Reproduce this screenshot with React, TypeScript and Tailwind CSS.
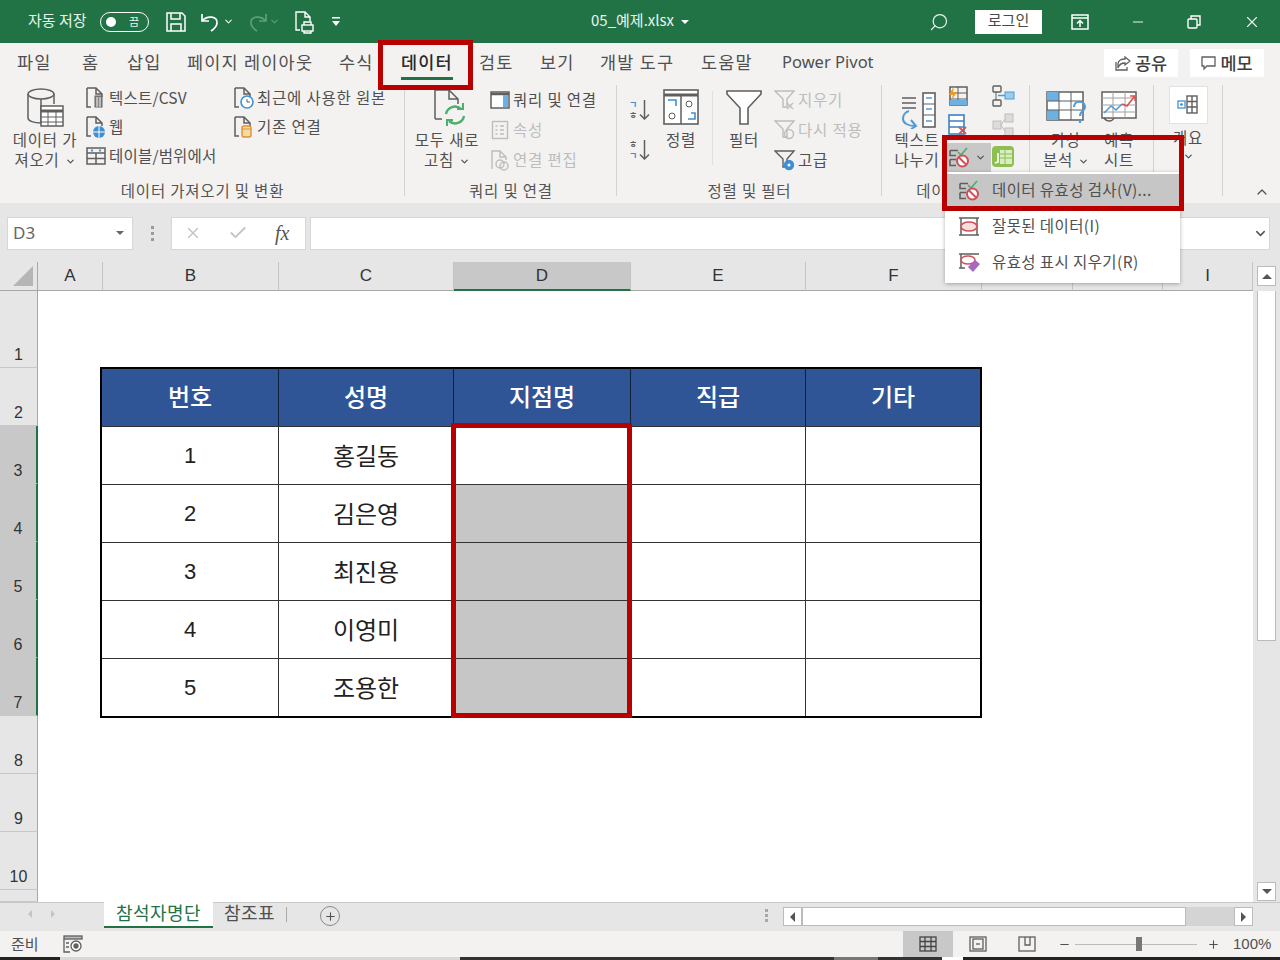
import type { ReactNode } from "react";
import { ChevronDown, ChevronUp, Minus, Plus, Search, X, Check } from "lucide-react";

const GRAY = "#5f5f5f";
const BLUE = "#4f9bd8";

const Doc = ({ children }: { children?: ReactNode }) => (
  <svg width="22" height="24" viewBox="0 0 22 24" fill="none">
    <path d="M2 2h9l6 6v3M11 2v6h6M2 2v19h4" stroke={GRAY} strokeWidth="1.5" />
    {children}
  </svg>
);

const DocCsv = () => (
  <Doc>
    <rect x="10" y="10" width="7" height="11" fill="#8a8a8a" stroke={GRAY} />
    <path d="M12 11v10M15 11v10" stroke="#eee" />
  </Doc>
);
const DocWeb = () => (
  <Doc>
    <circle cx="14" cy="17" r="6" fill="#3f8fd2" />
    <path d="M14 11v12M8 17h12" stroke="#fff" />
  </Doc>
);
const DocClock = () => (
  <Doc>
    <circle cx="14" cy="16" r="6" fill="#fff" stroke="#3f8fd2" strokeWidth="1.6" />
    <path d="M14 13v3h3" stroke={GRAY} />
  </Doc>
);
const DocDb = () => (
  <Doc>
    <rect x="9" y="11" width="9" height="11" rx="2" fill="#f6d9a8" stroke="#e0912f" strokeWidth="1.4" />
    <path d="M9 14h9" stroke="#e0912f" />
  </Doc>
);
const TableIcon = () => (
  <svg width="22" height="20" viewBox="0 0 22 20" fill="none" stroke={GRAY} strokeWidth="1.5">
    <rect x="2" y="2" width="18" height="16" />
    <path d="M2 7h18M2 12.5h18M11 7v11" />
    <path d="M6 4.5h2M14 4.5h2" stroke="#3f8fd2" strokeWidth="2" />
  </svg>
);
const Database = () => (
  <svg width="40" height="42" viewBox="0 0 40 42" fill="none">
    <path d="M3 7v24c0 3 6 5 13 5V7" stroke={GRAY} strokeWidth="1.5" fill="#f3f2f1" />
    <path d="M29 7v10" stroke={GRAY} strokeWidth="1.5" />
    <ellipse cx="16" cy="7" rx="13" ry="5" stroke={GRAY} strokeWidth="1.5" fill="#f3f2f1" />
    <rect x="16" y="19" width="22" height="20" fill="#fff" stroke={GRAY} strokeWidth="1.5" />
    <path d="M16 24h22" stroke={GRAY} strokeWidth="3" />
    <path d="M16 30h22M16 35h22M23 24v15M31 24v15" stroke={GRAY} />
  </svg>
);
const Refresh = () => (
  <svg width="36" height="38" viewBox="0 0 36 38" fill="none">
    <path d="M1 30V1h14l9 9v5M15 1v9h9M1 30h7" stroke={GRAY} strokeWidth="1.5" />
    <path d="M12 25a9 9 0 0 1 15-5M30 27a9 9 0 0 1-15 5" stroke="#4caf6b" strokeWidth="2.4" />
    <path d="M29 14v6h-6M13 37v-6h6" stroke="#4caf6b" strokeWidth="2" />
  </svg>
);
const QueryPane = () => (
  <svg width="20" height="18" viewBox="0 0 20 18" fill="none">
    <rect x="1" y="1" width="18" height="16" fill="#fff" stroke={GRAY} strokeWidth="1.5" />
    <path d="M1 3h18" stroke={GRAY} strokeWidth="2.5" />
    <rect x="13" y="4" width="5" height="12" fill="#6eb0e2" />
  </svg>
);
const Props = () => (
  <svg width="18" height="20" viewBox="0 0 18 20" fill="none" stroke="#bdbdbd" strokeWidth="1.4">
    <rect x="1.5" y="1.5" width="15" height="17" />
    <path d="M4.5 6h2M4.5 10h2M4.5 14h2M9 6h4M9 10h4M9 14h4" />
  </svg>
);
const LinkDoc = () => (
  <svg width="20" height="22" viewBox="0 0 20 22" fill="none" stroke="#bdbdbd" strokeWidth="1.4">
    <path d="M2 20V2h8l6 6v3M10 2v6h6" />
    <circle cx="10" cy="15" r="4" />
    <circle cx="14" cy="17" r="4" />
  </svg>
);
const SortAsc = ({ flip }: { flip?: boolean }) => (
  <div className="flex items-center gap-[2px]">
    <div className="flex flex-col text-[9px] leading-[11px] font-bold tracking-normal">
      <span className={flip ? "text-[#5f5f5f]" : "text-[#3f8fd2]"}>{flip ? "ㅎ" : "ㄱ"}</span>
      <span className={flip ? "text-[#3f8fd2]" : "text-[#5f5f5f]"}>{flip ? "ㄱ" : "ㅎ"}</span>
    </div>
    <svg width="11" height="20" viewBox="0 0 11 20" fill="none" stroke={GRAY} strokeWidth="1.5">
      <path d="M5.5 0v19M1 14.5l4.5 4.5 4.5-4.5" />
    </svg>
  </div>
);
const SortBox = () => (
  <svg width="36" height="36" viewBox="0 0 36 36" fill="none">
    <rect x="1" y="1" width="34" height="34" fill="#fff" stroke={GRAY} strokeWidth="1.6" />
    <path d="M1 6h34" stroke={GRAY} strokeWidth="3" />
    <path d="M18 6v29" stroke={GRAY} strokeWidth="1.5" />
    <path d="M5 11h8v6M28 24h4v6h-7" stroke="#3f8fd2" strokeWidth="1.6" />
    <circle cx="9" cy="27" r="3" stroke={GRAY} />
    <circle cx="26" cy="15" r="3" stroke={GRAY} />
  </svg>
);
const Funnel = () => (
  <svg width="36" height="36" viewBox="0 0 36 36" fill="none" stroke={GRAY} strokeWidth="1.6">
    <path d="M1 2h34v3L22 19v16h-8V19L1 5z" fill="#fff" />
  </svg>
);
const SmallFunnel = ({ tone, mark }: { tone: string; mark: "x" | "r" | "g" }) => (
  <svg width="22" height="22" viewBox="0 0 22 22" fill="none" stroke={tone} strokeWidth="1.4">
    <path d="M1 2h19L13 10v8h-4v-8z" fill="#f3f2f1" />
    {mark === "x" && <path d="M13 14l6 6M19 14l-6 6" />}
    {mark === "r" && <circle cx="15" cy="15" r="4.5" />}
    {mark === "g" && <circle cx="15" cy="16" r="4.5" fill="#3f8fd2" stroke="#3f8fd2" />}
    {mark === "g" && <circle cx="15" cy="16" r="1.5" fill="#fff" stroke="none" />}
  </svg>
);
const SplitText = () => (
  <svg width="40" height="38" viewBox="0 0 40 38" fill="none">
    <path d="M5 7h14M5 12h14M5 17h14" stroke={GRAY} strokeWidth="1.6" />
    <rect x="26" y="2" width="12" height="34" fill="#fff" stroke={GRAY} strokeWidth="1.6" />
    <path d="M26 13h12M26 24h12" stroke={GRAY} />
    <path d="M29 7h6M29 18h6M29 30h6" stroke={BLUE} strokeWidth="1.6" />
    <path d="M12 20a8 8 0 0 0-6 8c0 4 5 7 12 7" stroke={BLUE} strokeWidth="2" />
    <path d="M14 29l5 6-5 3" stroke={BLUE} strokeWidth="2" />
  </svg>
);
const Flash = () => (
  <svg width="22" height="22" viewBox="0 0 22 22" fill="none">
    <rect x="4" y="2" width="17" height="18" stroke={GRAY} strokeWidth="1.5" />
    <path d="M4 8h17M4 14h17M12 2v18" stroke={GRAY} />
    <path d="M4 15h17v5H4z" fill="#6eb0e2" />
    <path d="M8 1L3 10h4l-2 6 6-9H7z" fill="#ef9b20" />
  </svg>
);
const Dedup = () => (
  <svg width="22" height="24" viewBox="0 0 22 24" fill="none">
    <rect x="3" y="2" width="15" height="19" fill="#fff" stroke="#3f7fc2" strokeWidth="1.6" />
    <path d="M3 8h15M3 14h15" stroke="#3f7fc2" strokeWidth="1.6" />
    <path d="M13 14l7 7M20 14l-7 7" stroke="#d9534f" strokeWidth="1.8" />
  </svg>
);
const Validation = () => (
  <svg width="22" height="21" viewBox="0 0 22 21" fill="none">
    <path d="M2 3.5h8M2 3.5v5h6M2 12.5v6h6M2 12.5h6" stroke={GRAY} strokeWidth="1.6" />
    <path d="M10 5l3 3 6-7" stroke="#4caf6b" strokeWidth="1.6" />
    <circle cx="14.5" cy="14" r="5.5" fill="#fff" stroke="#d2505a" strokeWidth="2" />
    <path d="M10.5 10l8 8" stroke="#d2505a" strokeWidth="2" />
  </svg>
);
const Circled = () => (
  <svg width="22" height="21" viewBox="0 0 22 21" fill="none">
    <path d="M1 2h20M1 19h20M3 2v17M19 2v17" stroke={GRAY} strokeWidth="1.5" />
    <ellipse cx="11" cy="10.5" rx="8" ry="4.5" fill="#f7dfe0" stroke="#d2505a" strokeWidth="1.6" />
  </svg>
);
const ClearCircle = () => (
  <svg width="22" height="21" viewBox="0 0 22 21" fill="none">
    <path d="M1 2h20M3 2v14M1 16h6" stroke={GRAY} strokeWidth="1.5" />
    <ellipse cx="10" cy="8" rx="7" ry="4" stroke="#d2505a" strokeWidth="1.5" />
    <path d="M10 15l7-7 5 4-7 8z" fill="#a767c5" />
  </svg>
);
const Consolidate = () => (
  <svg width="24" height="22" viewBox="0 0 24 22" fill="none">
    <rect x="2" y="1" width="8" height="6" rx="1" stroke={GRAY} strokeWidth="1.4" />
    <rect x="2" y="15" width="8" height="6" rx="1" stroke={GRAY} strokeWidth="1.4" />
    <path d="M5 7v8" stroke={GRAY} />
    <rect x="14" y="7" width="9" height="7" fill="#9ccbee" stroke={BLUE} />
    <path d="M7 10.5h7" stroke={BLUE} strokeWidth="1.5" />
  </svg>
);
const Relations = () => (
  <svg width="24" height="24" viewBox="0 0 24 24" fill="#dcdcdc" stroke="#bdbdbd">
    <rect x="14" y="1" width="8" height="8" />
    <rect x="2" y="8" width="8" height="8" />
    <rect x="14" y="15" width="8" height="8" />
    <path d="M10 12l4-6M10 12l4 6" />
  </svg>
);
const DataModel = () => (
  <svg width="24" height="26" viewBox="0 0 24 26" fill="none">
    <rect x="1" y="3" width="22" height="21" rx="4" fill="#8cc152" />
    <rect x="9" y="7" width="12" height="14" fill="#d9ecc2" />
    <path d="M9 11h12M9 15h12M14 7v14" stroke="#8cc152" />
    <path d="M7 10v9l-3 1" stroke="#fff" strokeWidth="1.6" />
  </svg>
);
const WhatIf = () => (
  <svg width="42" height="34" viewBox="0 0 42 34" fill="none">
    <rect x="1" y="1" width="36" height="28" fill="#fff" stroke={GRAY} strokeWidth="1.5" />
    <rect x="1" y="1" width="12" height="9" fill="#6eb0e2" />
    <rect x="1" y="19" width="12" height="10" fill="#6eb0e2" />
    <path d="M1 10h36M1 19h36M13 1v28M25 1v28" stroke={GRAY} />
    <path d="M28 16c0-7 11-7 11 0 0 4-5 4-5 9M34 29v3" stroke={BLUE} strokeWidth="2.2" />
  </svg>
);
const Forecast = () => (
  <svg width="36" height="32" viewBox="0 0 36 32" fill="none">
    <rect x="1" y="1" width="34" height="26" fill="#fff" stroke={GRAY} strokeWidth="1.5" />
    <path d="M1 7h34M1 14h34M1 21h34M12 1v26M24 1v26" stroke="#a0a0a0" />
    <path d="M3 22l7-7 5 4 6-6" stroke={BLUE} strokeWidth="1.6" />
    <path d="M21 13l5 2 7-9M29 5h5v5" stroke="#d9534f" strokeWidth="1.6" />
    <path d="M3 27c3 4 8 4 10 0" stroke={GRAY} strokeWidth="1.4" />
  </svg>
);
const Outline = () => (
  <svg width="22" height="20" viewBox="0 0 22 20" fill="none" stroke={GRAY} strokeWidth="1.4">
    <rect x="1" y="6" width="7" height="7" stroke={BLUE} />
    <path d="M3 9.5h3M4.5 8v3" stroke={BLUE} />
    <rect x="10" y="1" width="10" height="17" />
    <path d="M10 6.5h10M10 12h10M15 1v17" />
  </svg>
);

const Tab = ({ children, width, active }: { children: ReactNode; width: string; active?: boolean }) => (
  <div className={`shrink-0 ${width}`}>
    <div className={`relative inline-block pb-[5px] ${active ? "font-medium text-[#2a2a2a]" : ""}`}>
      {children}
      {active && <div className="absolute left-0 right-0 bottom-0 h-[3px] bg-[#217346]" />}
    </div>
  </div>
);

const Row = ({ icon, label, faded, tall, tight }: { icon: ReactNode; label: string; faded?: boolean; tall?: boolean; tight?: boolean }) => (
  <div className={`flex items-center gap-[2px] whitespace-nowrap ${tall ? "h-[30px]" : "h-[29px]"} ${faded ? "text-[#bdbdbd]" : ""}`}>
    <div className="flex w-[22px] justify-center">{icon}</div>
    <span className={tight ? "tracking-[0.2px]" : ""}>{label}</span>
  </div>
);

const Chev = () => <ChevronDown className="ml-[5px] inline h-[11px] w-[11px]" strokeWidth={2.6} />;

const Big = ({ icon, top, bottom, width, arrow }: { icon: ReactNode; top: string; bottom?: string; width: string; arrow?: boolean }) => (
  <div className={`flex shrink-0 flex-col items-center ${width}`}>
    <div className="flex h-[46px] items-end">{icon}</div>
    <div className="whitespace-nowrap leading-[20px]">{top}</div>
    {bottom && (
      <div className="whitespace-nowrap leading-[20px]">
        {bottom}
        {arrow && <Chev />}
      </div>
    )}
  </div>
);

const Group = ({ width, label, children }: { width: string; label: string; children: ReactNode }) => (
  <div className={`relative flex shrink-0 flex-col ${width}`}>
    <div className="flex flex-1 items-start pt-[3px]">{children}</div>
    <div className="h-[25px] whitespace-nowrap text-center leading-[24px] text-[#555]">{label}</div>
    <div className="absolute right-0 top-[5px] bottom-[7px] w-px bg-[#d2d2d2]" />
  </div>
);

const colHeads = [
  ["A", "w-[65px]"],
  ["B", "w-[176px]"],
  ["C", "w-[175px]"],
  ["D", "w-[177px]"],
  ["E", "w-[175px]"],
  ["F", "w-[176px]"],
  ["", "w-[91px]"],
  ["", "w-[90px]"],
  ["I", "w-[90px]"],
];

const rowHeads = [
  ["1", "h-[77px]"],
  ["2", "h-[58px]"],
  ["3", "h-[58px]"],
  ["4", "h-[58px]"],
  ["5", "h-[58px]"],
  ["6", "h-[58px]"],
  ["7", "h-[58px]"],
  ["8", "h-[58px]"],
  ["9", "h-[58px]"],
  ["10", "h-[58px]"],
  ["", "h-[12px]"],
];

const people = [
  ["1", "홍길동"],
  ["2", "김은영"],
  ["3", "최진용"],
  ["4", "이영미"],
  ["5", "조용한"],
];

export default function App() {
  return (
    <div
      className="relative flex h-[960px] w-[1280px] flex-col overflow-hidden bg-[#f3f2f1] text-[16px] text-[#505050]"
      style={{ fontFamily: "'Noto Sans CJK KR', 'Noto Sans', sans-serif" }}
    >
      {/* Title bar */}
      <div className="flex h-[43px] shrink-0 items-center bg-[#217346] text-[#e9f3ed]">
        <span className="ml-[28px] w-[72px] whitespace-nowrap pb-[2px] text-[15px]">자동 저장</span>
        <div className="flex h-[20px] w-[49px] items-center justify-between rounded-full border border-white pl-[5px] pr-[9px]">
          <div className="h-[10px] w-[10px] rounded-full bg-white" />
          <span className="text-[11px] leading-none">끔</span>
        </div>
        <svg className="ml-[16px]" width="22" height="22" viewBox="0 0 22 22" fill="none" stroke="#fff" strokeWidth="1.5">
          <path d="M2 2h15l3 3v15H2zM6 2v6h9V2M6 20v-7h10v7" />
        </svg>
        <svg className="ml-[13px]" width="22" height="22" viewBox="0 0 22 22" fill="none" stroke="#fff" strokeWidth="1.7">
          <path d="M2 3v7h7M2 10c5-6 16-5 15 2 0 3-3 6-6 8" />
        </svg>
        <ChevronDown className="ml-[1px] h-[11px] w-[11px]" strokeWidth={2.5} />
        <svg className="ml-[12px]" width="22" height="22" viewBox="0 0 22 22" fill="none" stroke="#5d9f7d" strokeWidth="1.7">
          <path d="M20 3v7h-7M20 10C15 4 4 5 5 12c0 3 3 6 6 8" />
        </svg>
        <ChevronDown className="ml-[1px] h-[11px] w-[11px] text-[#5d9f7d]" strokeWidth={2.5} />
        <svg className="ml-[13px]" width="22" height="24" viewBox="0 0 22 24" fill="none" stroke="#fff" strokeWidth="1.4">
          <path d="M7 20H3V2h9l5 5v4M12 2v5h5" />
          <rect x="9" y="15" width="11" height="6" />
          <path d="M11 15v-3h7v3M11 21v2h7v-2" />
        </svg>
        <svg className="ml-[16px]" width="10" height="12" viewBox="0 0 10 12" fill="#fff">
          <path d="M1 1h8v1.5H1zM1 5h8L5 10z" />
        </svg>
        <div className="ml-[250px] w-[70px] whitespace-nowrap pb-[3px] text-[15px]">05_예제.xlsx</div>
        <div className="ml-[20px] h-0 w-0 border-x-[4px] border-t-[4px] border-x-transparent border-t-white" />
        <Search className="ml-[240px] h-[20px] w-[20px] -scale-x-100" strokeWidth={1.5} />
        <div className="ml-[26px] flex h-[24px] w-[67px] items-center justify-center bg-white pb-[2px] text-[15px] text-[#4a4a4a]">로그인</div>
        <svg className="ml-[29px]" width="18" height="16" viewBox="0 0 18 16" fill="none" stroke="#fff" strokeWidth="1.5">
          <rect x="1" y="1" width="16" height="14" />
          <path d="M1 4h16M9 13V7M6 9.5L9 6.5l3 3" />
        </svg>
        <Minus className="ml-[41px] h-[16px] w-[16px]" strokeWidth={1.5} />
        <svg className="ml-[41px]" width="14" height="14" viewBox="0 0 14 14" fill="none" stroke="#fff" strokeWidth="1.4">
          <rect x="1" y="4" width="9" height="9" rx="1" />
          <path d="M4 4V1h9v9h-3" />
        </svg>
        <X className="ml-[42px] h-[18px] w-[18px]" strokeWidth={1.5} />
      </div>

      {/* Ribbon tabs */}
      <div className="flex h-[37px] shrink-0 items-start justify-between pl-[17px] pt-[6px] text-[17.5px] leading-[26px]">
        <div className="flex whitespace-nowrap tracking-[1.2px]">
          <Tab width="w-[65px]">파일</Tab>
          <Tab width="w-[45px]">홈</Tab>
          <Tab width="w-[60px]">삽입</Tab>
          <Tab width="w-[152px]">페이지 레이아웃</Tab>
          <Tab width="w-[62px]">수식</Tab>
          <Tab width="w-[78px]" active>데이터</Tab>
          <Tab width="w-[61px]">검토</Tab>
          <Tab width="w-[60px]">보기</Tab>
          <Tab width="w-[101px]">개발 도구</Tab>
          <Tab width="w-[81px]">도움말</Tab>
          <span className="text-[16.5px] tracking-normal" style={{ fontFamily: "'Noto Sans', sans-serif" }}>Power Pivot</span>
        </div>
        <div className="mr-[16px] flex gap-[12px] text-[#3f3f3f]">
          <div className="flex h-[28px] w-[74px] items-center justify-center gap-[4px] bg-white font-medium">
            <svg width="16" height="15" viewBox="0 0 16 15" fill="none" stroke={GRAY} strokeWidth="1.3">
              <path d="M10 1l5 4-5 4V7C6 7 4 9 3 12V8c0-3 3-5 7-5zM1 6v8h11v-3" />
            </svg>
            공유
          </div>
          <div className="flex h-[28px] w-[74px] items-center justify-center gap-[4px] bg-white font-medium">
            <svg width="15" height="15" viewBox="0 0 15 15" fill="none" stroke={GRAY} strokeWidth="1.3">
              <path d="M1 1h13v9H6l-3 3v-3H1z" />
            </svg>
            메모
          </div>
        </div>
      </div>

      {/* Ribbon */}
      <div className="flex h-[123px] shrink-0 text-[15.5px] tracking-[0.8px] shadow-[0_2px_3px_rgba(0,0,0,0.18)]">
        <Group width="w-[405px]" label="데이터 가져오기 및 변환">
          <div className="ml-[5px]">
            <Big icon={<Database />} top="데이터 가" bottom="져오기" width="w-[80px]" arrow />
          </div>
          <div className="flex w-[148px] flex-col">
            <Row icon={<DocCsv />} label="텍스트/CSV" tight />
            <Row icon={<DocWeb />} label="웹" />
            <Row icon={<TableIcon />} label="테이블/범위에서" tight />
          </div>
          <div className="flex flex-col">
            <Row icon={<DocClock />} label="최근에 사용한 원본" />
            <Row icon={<DocDb />} label="기존 연결" />
          </div>
        </Group>
        <Group width="w-[212px]" label="쿼리 및 연결">
          <Big icon={<div className="ml-[10px] pb-[2px]"><Refresh /></div>} top="모두 새로" bottom="고침" width="w-[84px]" arrow />
          <div className="flex flex-col pt-[2px]">
            <Row icon={<QueryPane />} label="쿼리 및 연결" tall />
            <Row icon={<Props />} label="속성" faded tall />
            <Row icon={<LinkDoc />} label="연결 편집" faded tall />
          </div>
        </Group>
        <Group width="w-[265px]" label="정렬 및 필터">
          <div className="ml-[12px] flex h-[78px] w-[34px] flex-col justify-between pt-[16px]">
            <SortAsc />
            <SortAsc flip />
          </div>
          <Big icon={<div className="pb-[4px]"><SortBox /></div>} top="정렬" width="w-[36px]" />
          <div className="mx-[13px] mt-[8px] h-[74px] w-px bg-[#e0e0e0]" />
          <Big icon={<div className="pb-[4px]"><Funnel /></div>} top="필터" width="w-[36px]" />
          <div className="ml-[12px] flex flex-col pt-[2px]">
            <Row icon={<SmallFunnel tone="#bdbdbd" mark="x" />} label="지우기" faded tall />
            <Row icon={<SmallFunnel tone="#bdbdbd" mark="r" />} label="다시 적용" faded tall />
            <Row icon={<SmallFunnel tone={GRAY} mark="g" />} label="고급" tall />
          </div>
        </Group>
        <Group width="w-[148px]" label="데이터 도구">
          <div className="ml-[10px]">
            <Big icon={<SplitText />} top="텍스트" bottom="나누기" width="w-[50px]" />
          </div>
          <div className="ml-[4px] flex flex-col gap-[6px] pt-[2px]">
            <Flash />
            <Dedup />
            <Validation />
          </div>
          <div className="ml-[23px] flex flex-col gap-[6px] pt-[2px]">
            <Consolidate />
            <Relations />
            <DataModel />
          </div>
        </Group>
        <Group width="w-[124px]" label="">
          <div className="ml-[10px]">
            <Big icon={<div className="pb-[4px] pl-[2px]"><WhatIf /></div>} top="가상" bottom="분석" width="w-[52px]" arrow />
          </div>
          <div className="ml-[5px]">
            <Big icon={<div className="pb-[6px]"><Forecast /></div>} top="예측" bottom="시트" width="w-[44px]" />
          </div>
        </Group>
        <Group width="w-[69px]" label="">
          <div className="ml-[14px] flex w-[40px] flex-col items-center pt-[3px]">
            <div className="flex h-[38px] w-[39px] items-center justify-center border border-[#e2e2e2] bg-white">
              <Outline />
            </div>
            <div className="mt-[3px] leading-[20px]">개요</div>
            <ChevronDown className="mt-[4px] h-[11px] w-[11px]" strokeWidth={2.6} />
          </div>
        </Group>
        <div className="flex flex-1 items-end justify-end pb-[3px] pr-[10px]">
          <ChevronUp className="h-[16px] w-[16px]" strokeWidth={1.8} />
        </div>
      </div>

      {/* Formula bar */}
      <div className="flex h-[59px] shrink-0 items-center bg-[#e6e6e6] pl-[7px] pr-[10px] pt-[1px]">
        <div className="flex h-[33px] w-[126px] items-center justify-between border border-[#d6d6d6] bg-white pl-[5px] pr-[8px] text-[17px] text-[#666]" style={{ fontFamily: "'Noto Sans', sans-serif" }}>
          D3
          <div className="h-0 w-0 border-x-[4px] border-t-[4px] border-x-transparent border-t-[#666]" />
        </div>
        <div className="flex w-[38px] flex-col items-center gap-[3px]">
          <div className="h-[3px] w-[3px] bg-[#9a9a9a]" />
          <div className="h-[3px] w-[3px] bg-[#9a9a9a]" />
          <div className="h-[3px] w-[3px] bg-[#9a9a9a]" />
        </div>
        <div className="flex h-[33px] w-[135px] items-center border border-[#d6d6d6] bg-white pl-[12px] text-[#c4c4c4]">
          <X className="h-[18px] w-[18px]" strokeWidth={2} />
          <Check className="ml-[26px] h-[20px] w-[20px]" strokeWidth={2.2} />
          <span className="ml-[27px] text-[20px] italic text-[#555]" style={{ fontFamily: "'Liberation Serif', serif" }}>fx</span>
        </div>
        <div className="ml-[4px] flex h-[33px] flex-1 items-center justify-end border border-[#d6d6d6] bg-white pr-[1px]">
          <ChevronDown className="h-[15px] w-[15px] text-[#555]" strokeWidth={2.4} />
        </div>
      </div>

      {/* Column headers */}
      <div className="flex h-[29px] shrink-0 bg-[#e6e6e6] text-[17px] text-[#333]" style={{ fontFamily: "'Liberation Sans', sans-serif" }}>
        <div className="flex w-[38px] shrink-0 items-end justify-end border-b border-r border-[#a8a8a8] pb-[4px] pr-[4px]">
          <div className="h-0 w-0 border-b-[20px] border-l-[20px] border-b-[#b5b5b5] border-l-transparent" />
        </div>
        {colHeads.map(([name, width], i) => (
          <div
            key={i}
            className={`flex shrink-0 items-center justify-center border-r border-[#c4c4c4] ${width} ${
              name === "D" ? "border-b-[2px] !border-b-[#217346] bg-[#c8c8c8]" : "border-b border-b-[#a8a8a8]"
            }`}
          >
            {name}
          </div>
        ))}
        <div className="flex flex-1 justify-center pt-[4px]">
          <div className="flex h-[20px] w-[19px] items-center justify-center border border-[#bbb] bg-white">
            <div className="h-0 w-0 border-x-[5px] border-b-[5px] border-x-transparent border-b-[#555]" />
          </div>
        </div>
      </div>

      {/* Sheet */}
      <div className="flex h-[611px] shrink-0 overflow-hidden">
        <div className="flex w-[38px] shrink-0 flex-col bg-[#e6e6e6] text-[16px] text-[#333]" style={{ fontFamily: "'Liberation Sans', sans-serif" }}>
          {rowHeads.map(([name, height], i) => (
            <div
              key={i}
              className={`flex shrink-0 items-end justify-center border-b border-[#c8c8c8] ${height} ${
                i >= 2 && i <= 6 ? "border-r-[2px] border-r-[#217346] bg-[#c8c8c8]" : "border-r border-r-[#a8a8a8]"
              }`}
            >
              {name}
            </div>
          ))}
        </div>
        <div className="relative flex-1 bg-white pl-[62px] pt-[76px]">
          <div className="grid w-[882px] grid-cols-[177px_175px_177px_175px_174px] border-2 border-black text-[24px] text-[#222]">
            {["번호", "성명", "지점명", "직급", "기타"].map((h, i) => (
              <div key={h} className={`flex h-[57px] items-center justify-center bg-[#2f5597] pb-[3px] font-medium text-white ${i < 4 ? "border-r border-[#10213f]" : ""}`}>
                {h}
              </div>
            ))}
            {people.map(([num, name], r) => (
              <div key={num} className="contents">
                <div className="flex h-[58px] items-center justify-center border-r border-t border-[#333] text-[22px]" style={{ fontFamily: "'Liberation Sans', sans-serif" }}>{num}</div>
                <div className="flex h-[58px] items-center justify-center border-r border-t border-[#333] pb-[2px]">{name}</div>
                <div className={`h-[58px] border-r border-t border-[#333] ${r > 0 ? "bg-[#c6c6c6]" : ""}`} />
                <div className="h-[58px] border-r border-t border-[#333]" />
                <div className="h-[58px] border-t border-[#333]" />
              </div>
            ))}
          </div>
          {/* selection highlight */}
          <div className="absolute left-[413px] top-[132px] h-[295px] w-[181px] border-[5px] border-[#b90000]" />
        </div>
        <div className="flex w-[27px] shrink-0 flex-col items-center justify-end bg-[#e6e6e6] pb-[1px]">
          <div className="mb-[auto] h-[350px] w-[19px] border-x border-b border-[#bbb] bg-white" />
          <div className="flex h-[19px] w-[19px] items-center justify-center border border-[#bbb] bg-white">
            <div className="h-0 w-0 border-x-[5px] border-t-[5px] border-x-transparent border-t-[#555]" />
          </div>
        </div>
      </div>

      {/* Sheet tabs */}
      <div className="flex h-[29px] shrink-0 items-start border-t border-[#c8c8c8] bg-[#e6e6e6]">
        <div className="flex h-[22px] w-[104px] shrink-0 items-center gap-[19px] pl-[28px] text-[#bcbcbc]">
          <div className="h-0 w-0 border-y-[4px] border-r-[4px] border-y-transparent border-r-[#c4c4c4]" />
          <div className="h-0 w-0 border-y-[4px] border-l-[4px] border-y-transparent border-l-[#c4c4c4]" />
        </div>
        <div className="-mt-px flex h-[26px] w-[109px] shrink-0 items-center justify-center whitespace-nowrap border-b-[2px] border-[#217346] bg-white pb-[3px] text-[18px] tracking-[0.4px] text-[#217346]">참석자명단</div>
        <div className="ml-[11px] w-[53px] shrink-0 whitespace-nowrap text-[18px] leading-[18px] tracking-[0.4px]">참조표</div>
        <div className="ml-[9px] mt-[4px] h-[15px] w-px bg-[#aaa]" />
        <div className="ml-[33px] mt-[3px] flex h-[20px] w-[20px] shrink-0 items-center justify-center rounded-full border-[1.5px] border-[#8a8a8a]">
          <Plus className="h-[13px] w-[13px]" strokeWidth={2} />
        </div>
        <div className="ml-[425px] mt-[6px] flex w-[4px] flex-col gap-[2px]">
          <div className="h-[3px] w-[3px] bg-[#a8a8a8]" />
          <div className="h-[3px] w-[3px] bg-[#a8a8a8]" />
          <div className="h-[3px] w-[3px] bg-[#a8a8a8]" />
        </div>
        <div className="ml-[14px] mt-[4px] flex h-[19px] w-[470px] shrink-0 bg-[#d4d4d4]">
          <div className="flex w-[19px] items-center justify-center border border-[#bbb] bg-white">
            <div className="h-0 w-0 border-y-[5px] border-r-[5px] border-y-transparent border-r-[#555]" />
          </div>
          <div className="w-[384px] border border-[#bbb] bg-white" />
          <div className="flex-1" />
          <div className="flex w-[19px] items-center justify-center border border-[#bbb] bg-white">
            <div className="h-0 w-0 border-y-[5px] border-l-[5px] border-y-transparent border-l-[#555]" />
          </div>
        </div>
      </div>

      {/* Status bar */}
      <div className="flex h-[26px] shrink-0 items-center text-[15px]">
        <span className="ml-[11px] w-[52px] whitespace-nowrap">준비</span>
        <svg width="20" height="18" viewBox="0 0 20 18" fill="none" stroke={GRAY} strokeWidth="1.3">
          <rect x="1" y="1" width="18" height="3" fill="#bbb" />
          <path d="M1 4v13h6M3 8h3M3 12h3" />
          <circle cx="13" cy="11" r="5" fill="#fff" />
          <circle cx="13" cy="11" r="2" fill={GRAY} />
        </svg>
        <div className="ml-[820px] flex h-[26px] w-[50px] items-center justify-center bg-[#c8c8c8]">
          <svg width="18" height="16" viewBox="0 0 18 16" fill="none" stroke="#444" strokeWidth="1.3">
            <rect x="1" y="1" width="16" height="14" />
            <path d="M1 5.5h16M1 10.5h16M6 1v14M12 1v14" />
          </svg>
        </div>
        <svg className="ml-[16px]" width="18" height="16" viewBox="0 0 18 16" fill="none" stroke={GRAY} strokeWidth="1.3">
          <rect x="1" y="1" width="16" height="14" />
          <rect x="4" y="3" width="10" height="10" />
          <path d="M7 8h4" />
        </svg>
        <svg className="ml-[31px]" width="18" height="16" viewBox="0 0 18 16" fill="none" stroke={GRAY} strokeWidth="1.3">
          <rect x="1" y="1" width="16" height="14" />
          <path d="M7 1v8h5V1" />
        </svg>
        <Minus className="ml-[22px] h-[13px] w-[13px]" strokeWidth={2} />
        <div className="relative ml-[4px] flex h-[16px] w-[122px] items-center">
          <div className="h-px w-full bg-[#bbb]" />
          <div className="absolute left-[61px] h-[14px] w-[6px] bg-[#777]" />
        </div>
        <Plus className="ml-[10px] h-[13px] w-[13px]" strokeWidth={2} />
        <span className="ml-[13px] whitespace-nowrap" style={{ fontFamily: "'Liberation Sans', sans-serif" }}>100%</span>
      </div>

      {/* Screen edge */}
      <div className="flex h-[3px] shrink-0">
        <div className="w-[60px] bg-[#222]" />
        <div className="w-[400px] bg-[#d8d8d8]" />
        <div className="w-[374px] bg-[#333]" />
        <div className="w-[44px] bg-[#777]" />
        <div className="w-[64px] bg-[#333]" />
        <div className="w-[21px] bg-white" />
        <div className="flex-1 bg-[#222]" />
      </div>

      {/* Dropdown menu */}
      <div className="absolute left-[947px] top-[143px] flex h-[29px] w-[44px] items-center bg-[#c8c8c8] pl-[1px]">
        <Validation />
        <ChevronDown className="ml-[5px] h-[11px] w-[11px]" strokeWidth={2.6} />
      </div>
      <div className="absolute left-[945px] top-[172px] flex h-[111px] w-[235px] flex-col bg-white pt-[2px] text-[15.5px] tracking-[0.4px] shadow-[0_1px_4px_rgba(0,0,0,0.3)]">
        <div className="flex h-[34px] items-center gap-[12px] whitespace-nowrap bg-[#c6c6c6] pb-[2px] pl-[13px]">
          <Validation />
          <span>데이터 유효성 검사(V)...</span>
        </div>
        <div className="flex h-[36px] items-center gap-[12px] whitespace-nowrap pl-[13px]">
          <Circled />
          <span>잘못된 데이터(I)</span>
        </div>
        <div className="flex h-[36px] items-center gap-[12px] whitespace-nowrap pl-[13px]">
          <ClearCircle />
          <span>유효성 표시 지우기(R)</span>
        </div>
      </div>

      {/* Callout boxes */}
      <div className="absolute left-[378px] top-[40px] h-[50px] w-[95px] border-[5px] border-[#b90000]" />
      <div className="absolute left-[942px] top-[135px] h-[76px] w-[242px] border-[5px] border-[#b90000]" />
    </div>
  );
}
